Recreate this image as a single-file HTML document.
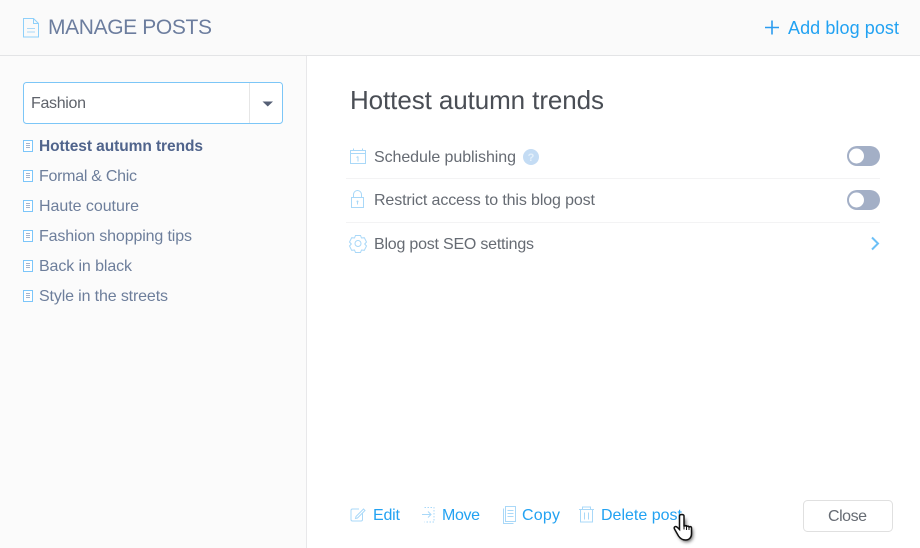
<!DOCTYPE html>
<html><head><meta charset="utf-8"><style>
html,body{margin:0;padding:0;background:#fff;width:920px;height:548px;overflow:hidden}
svg{display:block}
text{font-family:"Liberation Sans",sans-serif;white-space:pre}
.l{font-size:16px;fill:#6d7e9b}
.r{font-size:16px;fill:#666b73}
.b{font-size:16px;fill:#22a2f2}
.i{fill:none;stroke:#a9d8f8;stroke-width:1}
</style></head><body>
<svg width="920" height="548" viewBox="0 0 920 548" xmlns="http://www.w3.org/2000/svg">
<defs>
<filter id="s" x="-50%" y="-50%" width="200%" height="200%"><feGaussianBlur stdDeviation="1.8"/></filter>
<g id="doc"><rect x="0.500" y="0.500" width="9" height="11" fill="#fff" stroke="#7cc6fa"/><path d="M3 3.500h4M3 5.500h4M3 7.500h4" stroke="#a5b4cc" fill="none" stroke-width="1"/></g>
</defs>
<rect width="920" height="548" fill="#fff"/>
<rect width="920" height="55" fill="#fafafa"/>
<rect y="56" width="306" height="492" fill="#fbfbfb"/>
<rect y="55" width="920" height="1" fill="#e3e4e6"/>
<rect x="306" y="56" width="1" height="492" fill="#e8e8ea"/>

<!-- header -->
<path d="M23.500 18.500h10l5 5v13.500h-15zM33.500 18.500v5h5" fill="none" stroke="#8fd0fa"/>
<path d="M27 28.500h8M27 32h8" fill="none" stroke="#a9d8f8"/>
<text x="48" y="34" font-size="21" fill="#6c7d9e" textLength="164">MANAGE POSTS</text>
<path d="M765 27.500h14M772 20.500v14" stroke="#2b9cef" stroke-width="1.600" fill="none"/>
<text x="788" y="34" font-size="18" fill="#22a2f2" textLength="111">Add blog post</text>

<!-- select -->
<rect x="23.500" y="82.500" width="259" height="41" rx="3" fill="#fff" stroke="#7cc6f7"/>
<rect x="249" y="83" width="1" height="40" fill="#e6e6e6"/>
<text x="31" y="108" font-size="16" fill="#5f636b" textLength="55">Fashion</text>
<path d="M262.500 101.500h10.500l-5.250 5z" fill="#555f75"/>

<!-- list -->
<use href="#doc" x="23" y="140"/>
<text x="39" y="151" font-size="15.500" font-weight="bold" fill="#50648c" textLength="164">Hottest autumn trends</text>
<use href="#doc" x="23" y="170"/>
<text x="39" y="181" class="l" textLength="98">Formal &amp; Chic</text>
<use href="#doc" x="23" y="200"/>
<text x="39" y="211" class="l" textLength="100">Haute couture</text>
<use href="#doc" x="23" y="230"/>
<text x="39" y="241" class="l" textLength="153">Fashion shopping tips</text>
<use href="#doc" x="23" y="260"/>
<text x="39" y="271" class="l" textLength="93">Back in black</text>
<use href="#doc" x="23" y="290"/>
<text x="39" y="301" class="l" textLength="129">Style in the streets</text>

<!-- main -->
<text x="350" y="109" font-size="26" fill="#4a4e55" textLength="254">Hottest autumn trends</text>

<rect x="346" y="178" width="534" height="1" fill="#f3f3f4"/>
<rect x="346" y="222" width="534" height="1" fill="#f3f3f4"/>

<path class="i" d="M350.500 150.500h15v13h-15zM350.500 153.500h15M353.500 148.500v2M362.500 148.500v2M358 156.500v5M356.500 157.500l1.500-1"/>
<text x="374" y="162" class="r" textLength="142">Schedule publishing</text>
<circle cx="531" cy="157" r="8" fill="#c4dcf4"/>
<text x="531" y="161" font-size="11" font-weight="bold" fill="#e4f0fb" text-anchor="middle">?</text>

<path class="i" d="M351.500 197.500h12v10h-12zM353.500 197.500v-3a4 4 0 0 1 8 0v3M357.500 201.500v3"/>
<circle cx="357.500" cy="201.500" r="1" fill="#a9d8f8"/>
<text x="374" y="205" class="r" textLength="221">Restrict access to this blog post</text>

<path class="i" d="M355.500 236.500h5l1 2.500 2.800-.3 2.200 4.300-1.800 2 1.800 2-2.200 4.300-2.800-.3-1 2.500h-5l-1-2.500-2.800.3-2.200-4.300 1.800-2-1.800-2 2.200-4.300 2.800.3z" transform="translate(0 -1)"/>
<circle class="i" cx="358" cy="243.500" r="3"/>
<text x="374" y="249" class="r" textLength="160">Blog post SEO settings</text>

<rect x="847" y="146" width="33" height="20" rx="10" fill="#a3afc6"/>
<circle cx="856.500" cy="156" r="7.500" fill="#fff"/>
<rect x="847" y="190" width="33" height="20" rx="10" fill="#a3afc6"/>
<circle cx="856.500" cy="200" r="7.500" fill="#fff"/>
<path d="M872 237.500l6 6-6 6" fill="none" stroke="#6cc0f7" stroke-width="2"/>

<!-- bottom -->
<path class="i" d="M362.500 513.500v6a1.500 1.500 0 0 1-1.500 1.500h-8.500a1.500 1.500 0 0 1-1.500-1.500v-9a1.500 1.500 0 0 1 1.500-1.500h6.500M356 516.500l-.5 2 2-.5 7.500-7.500-1.500-1.500z"/>
<text x="373" y="520" class="b" textLength="27">Edit</text>
<path class="i" d="M424.500 507.500h9.500v14.500h-9.500" stroke-dasharray="1.500 1.500"/>
<path d="M422 514.500h9M428 511.500l3 3-3 3" fill="none" stroke="#a9d8f8"/>
<text x="442" y="520" class="b" textLength="38">Move</text>
<path class="i" d="M505.500 506.500h10v15h-10zM503.500 508.500v15h10M507.500 510.500h6M507.500 513.500h6M507.500 516.500h6"/>
<text x="522" y="520" class="b" textLength="38">Copy</text>
<path class="i" d="M579 509.500h15M582.500 509.500v-2.500h8v2.500M580.500 509.500v12.500h12v-12.500M584.500 512.500v7M588.500 512.500v7"/>
<text x="601" y="520" class="b" textLength="81">Delete post</text>

<rect x="803.500" y="500.500" width="89" height="31" rx="4" fill="#fff" stroke="#e0e0e0"/>
<text x="828" y="521" font-size="16" fill="#666b73" textLength="39">Close</text>

<!-- cursor -->
<path d="M680 518v12l-2-2c-2-2-4-1-3 1l4 7c2 3 4 4 7 4 4 0 6-3 6-6v-6c0-1-1-2-2-1 0-1-1-2-2-1 0-1-1-2-2-1l-1 0v-7c0-2-3-2-3 0z" fill="#000" opacity=".6" filter="url(#s)" transform="translate(1 2)"/>
<path d="M679.500 516.500v13l-2-2c-2-2-4-.500-3 1.500l4 7c2 3 4 4 7 4 4 0 6-3 6-6v-6c0-1.500-2-2-2.500-.5 0-1.500-2-2-2.500-.5 0-1.500-2-2-2.500-.5v-10.500c0-2-4.500-2-4.500 0z" fill="#fff" stroke="#111" stroke-width="1.500"/>
<path d="M684 524.500v5M686.500 525v5M689 526v4" stroke="#111" stroke-width="1" fill="none"/>
</svg>
</body></html>
